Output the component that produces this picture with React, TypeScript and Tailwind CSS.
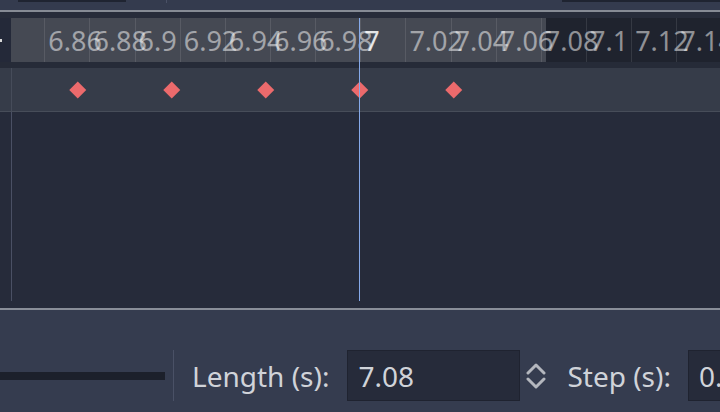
import React from 'react'

const ticks = ['6.86', '6.88', '6.9', '6.92', '6.94', '6.96', '6.98', '7', '7.02', '7.04', '7.06', '7.08', '7.1', '7.12', '7.14']
const keys = [0, 1, 2, 3, 4]

function TopStrip() {
  return (
    <>
      <div className="h-[10px] shrink-0 flex items-start bg-[#343b4e]">
        <div className="ml-[18px] w-[108px] h-[2px] bg-[#1f2431]" />
        <div className="ml-[40px] w-px h-[3px] bg-[#4a5166]" />
        <div className="ml-auto w-[158px] h-[2px] bg-[#1f2431]" />
      </div>
      <div className="h-[2px] shrink-0 bg-[#868b95]" />
      <div className="h-[6px] shrink-0 bg-[#272c3a]" />
    </>
  )
}

function Ruler() {
  return (
    <div className="h-[44px] shrink-0 flex">
      <div className="w-[11px] shrink-0 flex items-center bg-[#242939]">
        <span className="w-[2px] h-[3px] bg-[#d8d8d8]" />
      </div>
      <div className="flex-1 flex bg-[linear-gradient(to_right,#454953_535px,#1f232e_535px)]">
        <div className="w-[33.3px] shrink-0" />
        {ticks.map((t) => (
          <div key={t} className="w-[45.15px] shrink-0 border-l border-white/10 whitespace-nowrap">
            <div
              className={
                'pl-[3px] pt-[8.5px] text-[27px] leading-none ' +
                (t === '7' ? 'text-white/85' : 'text-white/50')
              }
            >
              {t}
            </div>
          </div>
        ))}
      </div>
    </div>
  )
}

function Track() {
  return (
    <>
      <div className="h-[6px] shrink-0 bg-[#262b38]" />
      <div className="h-[44px] shrink-0 flex bg-[#363c49] border-b border-[#474d59]">
        <div className="w-[11px] shrink-0" />
        <div className="w-px shrink-0 bg-[#464c5a]" />
        <div className="w-[58px] shrink-0" />
        <div className="flex items-center gap-[78px]">
          {keys.map((k) => (
            <div key={k} className="w-[16px] h-[16px] flex items-center justify-center">
              <div className="w-[11.5px] h-[11.5px] rotate-45 bg-[#ec6a6c]" />
            </div>
          ))}
        </div>
      </div>
    </>
  )
}

function Chevrons() {
  return (
    <svg width="20" height="28" viewBox="0 0 20 28" fill="none" stroke="#b4b7be" strokeWidth="3" strokeLinecap="round" strokeLinejoin="round">
      <polyline points="2,11 10,3 18,11" />
      <polyline points="2,17 10,25 18,17" />
    </svg>
  )
}

function BottomBar() {
  return (
    <div className="flex-1 bg-[#353c4f] text-[28px] text-[#d0d3d9]">
      <div className="mt-[40px] h-[51px] flex items-center whitespace-nowrap">
        <div className="w-[165px] h-[8px] shrink-0 bg-[#1c202b]" />
        <div className="ml-[8px] w-px h-[51px] shrink-0 bg-[#4a5166]" />
        <span className="ml-[18px]">Length (s):</span>
        <div className="ml-[18px] w-[173px] h-[51px] shrink-0 flex items-center pl-[10px] border border-[#1f2330] bg-[#262b3a]">
          7.08
        </div>
        <div className="ml-[6px] shrink-0">
          <Chevrons />
        </div>
        <span className="ml-[21px]">Step (s):</span>
        <div className="ml-[17px] w-[173px] h-[51px] shrink-0 flex items-center pl-[10px] border border-[#1f2330] bg-[#262b3a]">
          0.01
        </div>
      </div>
    </div>
  )
}

export default function App() {
  return (
    <div className="relative w-[720px] h-[412px] overflow-hidden flex flex-col bg-[#262b3a] font-['Noto_Sans',sans-serif]">
      <TopStrip />
      <Ruler />
      <Track />
      <div className="h-[196px] shrink-0 flex">
        <div className="w-[11px] shrink-0" />
        <div className="w-px h-[189px] bg-[#4a5064]" />
      </div>
      <div className="h-[2px] shrink-0 bg-[#898e98]" />
      <BottomBar />
      <div className="absolute left-[359px] top-[18px] w-px h-[283px] bg-[#86aaea]" />
    </div>
  )
}
